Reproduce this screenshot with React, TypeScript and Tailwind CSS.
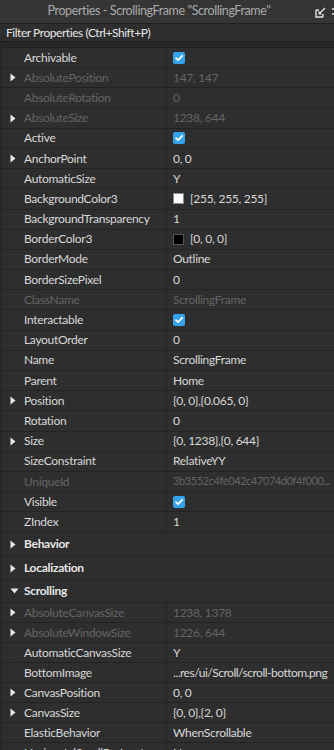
import React from "react";

type Row = {
  label: string;
  value?: string;
  check?: boolean;
  swatch?: string;
  disabled?: boolean;
  expand?: boolean;
  tight?: "a" | "b";
};

const rows1: Row[] = [
  { label: "Archivable", check: true },
  { label: "AbsolutePosition", value: "147, 147", disabled: true, expand: true },
  { label: "AbsoluteRotation", value: "0", disabled: true },
  { label: "AbsoluteSize", value: "1238, 644", disabled: true, expand: true },
  { label: "Active", check: true },
  { label: "AnchorPoint", value: "0, 0", expand: true },
  { label: "AutomaticSize", value: "Y" },
  { label: "BackgroundColor3", value: "[255, 255, 255]", swatch: "#ffffff" },
  { label: "BackgroundTransparency", value: "1" },
  { label: "BorderColor3", value: "[0, 0, 0]", swatch: "#000000" },
  { label: "BorderMode", value: "Outline" },
  { label: "BorderSizePixel", value: "0" },
  { label: "ClassName", value: "ScrollingFrame", disabled: true },
  { label: "Interactable", check: true },
  { label: "LayoutOrder", value: "0" },
  { label: "Name", value: "ScrollingFrame" },
  { label: "Parent", value: "Home" },
  { label: "Position", value: "{0, 0},{0.065, 0}", expand: true },
  { label: "Rotation", value: "0" },
  { label: "Size", value: "{0, 1238},{0, 644}", expand: true },
  { label: "SizeConstraint", value: "RelativeYY" },
  { label: "UniqueId", value: "3b3552c4fe042c47074d0f4f000...", disabled: true, tight: "b" },
  { label: "Visible", check: true },
  { label: "ZIndex", value: "1" },
];

const rows2: Row[] = [
  { label: "AbsoluteCanvasSize", value: "1238, 1378", disabled: true, expand: true },
  { label: "AbsoluteWindowSize", value: "1226, 644", disabled: true, expand: true },
  { label: "AutomaticCanvasSize", value: "Y" },
  { label: "BottomImage", value: "...res/ui/Scroll/scroll-bottom.png", tight: "a" },
  { label: "CanvasPosition", value: "0, 0", expand: true },
  { label: "CanvasSize", value: "{0, 0},{2, 0}", expand: true },
  { label: "ElasticBehavior", value: "WhenScrollable" },
  { label: "HorizontalScrollBarInset", value: "None" },
];

function TriRight() {
  return (
    <svg width="6" height="9" viewBox="0 0 6 9" className="block">
      <path d="M0.5 0.5 L5.5 4.5 L0.5 8.5 Z" fill="#e8e8e8" />
    </svg>
  );
}

function TriDown() {
  return (
    <svg width="9" height="6" viewBox="0 0 9 6" className="block">
      <path d="M0.5 0.5 L8.5 0.5 L4.5 5.5 Z" fill="#e8e8e8" />
    </svg>
  );
}

function Check() {
  return (
    <div className="w-[12px] h-[12px] shrink-0 rounded-[2px] bg-[#35a3ee] flex items-center justify-center">
      <svg width="10" height="10" viewBox="0 0 10 10">
        <path d="M2 5.2 L4.1 7.2 L8.2 2.8" stroke="#ffffff" strokeWidth="1.8" fill="none" strokeLinecap="round" strokeLinejoin="round" />
      </svg>
    </div>
  );
}

function PropRow({ r, h }: { r: Row; h: string }) {
  const txt = r.disabled ? "text-[#656565]" : "text-[#d8d8d8]";
  const tight = r.tight === "a" ? "tracking-[-0.5px]" : r.tight === "b" ? "text-[11px] tracking-[-0.4px]" : "";
  return (
    <div className={`flex border-b border-[#232323] ${h}`}>
      <div className="w-[165px] shrink-0 flex items-center border-r border-[#232323]">
        <div className="w-[22px] shrink-0 flex items-center pl-[8px]">
          {r.expand ? <TriRight /> : null}
        </div>
        <span className={`${txt} whitespace-nowrap`}>{r.label}</span>
      </div>
      <div className="flex-1 min-w-0 flex items-center pl-[6px] gap-[6px]">
        {r.check ? <Check /> : null}
        {r.swatch ? (
          <div
            className={`w-[11px] h-[11px] shrink-0 border ${r.swatch === "#ffffff" ? "bg-white border-[#8a8a8a]" : "bg-black border-[#555555]"}`}
          />
        ) : null}
        {r.value ? <span className={`${txt} whitespace-nowrap ${tight}`}>{r.value}</span> : null}
      </div>
    </div>
  );
}

function Section({ title, open, h }: { title: string; open?: boolean; h: string }) {
  return (
    <div className={`flex items-center border-b border-[#232323] ${h}`}>
      <div className="w-[22px] shrink-0 flex items-center pl-[8px]">
        {open ? <TriDown /> : <TriRight />}
      </div>
      <span className="font-bold text-[#e6e6e6]">{title}</span>
    </div>
  );
}

export default function App() {
  return (
    <div
      className="w-[334px] h-[750px] overflow-hidden bg-[#2e2e2e] text-[12px] tracking-[-0.3px]"
      style={{ fontFamily: "Lato, sans-serif" }}
    >
      <div className="h-[24px] flex items-center bg-[#353535] border-b border-[#202020] relative">
        <div className="flex-1 text-center pr-[16px] text-[#aaaaaa] text-[12.5px] tracking-[-0.4px] whitespace-nowrap">
          Properties - ScrollingFrame "ScrollingFrame"
        </div>
        <div className="absolute right-[8px] top-[7px]">
          <svg width="11" height="11" viewBox="0 0 11 11">
            <path d="M1 3 V10 H8" stroke="#e0e0e0" strokeWidth="1.4" fill="none" />
            <path d="M1 3 H4 M8 10 V7" stroke="#e0e0e0" strokeWidth="1.4" fill="none" />
            <path d="M10 1 L4.5 6.5" stroke="#e0e0e0" strokeWidth="1.5" />
            <path d="M3.5 3.8 V7.5 H7.2 Z" fill="#e0e0e0" />
          </svg>
        </div>
        <div className="absolute right-[0px] top-[8px] w-[2px] h-[2px] bg-[#bbbbbb]" />
        <div className="absolute right-[0px] top-[13px] w-[2px] h-[2px] bg-[#bbbbbb]" />
      </div>
      <div className="h-[18px] flex items-center pl-[6px] text-[#e4e4e4] text-[12px] tracking-[-0.45px] border-b border-[#202020] bg-[#2e2e2e]">
        Filter Properties (Ctrl+Shift+P)
      </div>
      <div className="h-[5px] bg-[#262626]" />
      <div className="border-l-2 border-[#262626]">
        <div className="border-t border-[#232323]" />
        {rows1.map((r) => (
          <PropRow key={r.label} r={r} h="h-[20.2px]" />
        ))}
        <Section title="Behavior" h="h-[24.6px]" />
        <Section title="Localization" h="h-[23.4px]" />
        <Section title="Scrolling" open h="h-[22.6px]" />
        {rows2.map((r) => (
          <PropRow key={r.label} r={r} h="h-[20px]" />
        ))}
      </div>
    </div>
  );
}
